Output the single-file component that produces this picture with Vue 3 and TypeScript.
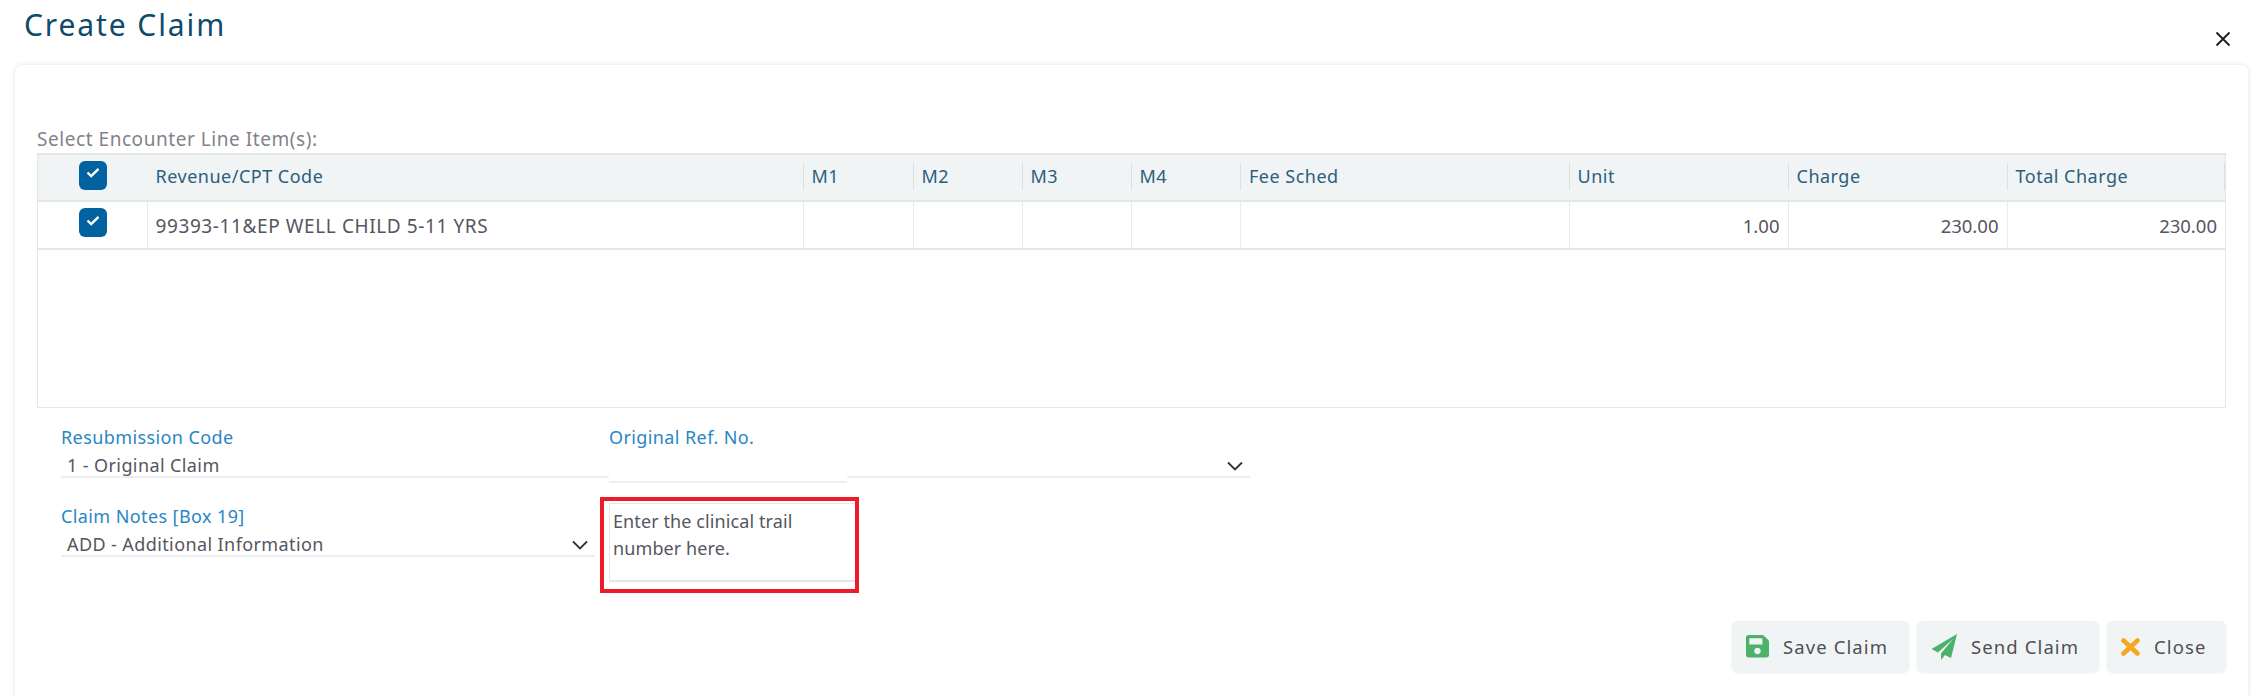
<script setup lang="ts">
interface Column { label: string }
const columns: Column[] = [
  { label: 'Revenue/CPT Code' }, { label: 'M1' }, { label: 'M2' }, { label: 'M3' }, { label: 'M4' },
  { label: 'Fee Sched' }, { label: 'Unit' }, { label: 'Charge' }, { label: 'Total Charge' },
]
const notes = 'Enter the clinical trail number here.'
</script>

<template>
  <div class="page">
    <header class="top">
      <h1 class="title">Create Claim</h1>
      <button class="x" aria-label="Close">
        <svg width="16" height="16" viewBox="0 0 16 16"><path d="M1.500 1.500 14.500 14.500M14.500 1.500 1.500 14.500" stroke="#1c1c1c" stroke-width="1.800" fill="none"/></svg>
      </button>
    </header>
    <main class="card">
      <div class="section-label">Select Encounter Line Item(s):</div>
      <div class="table">
        <div class="row head">
          <div class="cell check">
            <span class="box"><svg width="14" height="11" viewBox="0 0 14 11"><path d="M1.500 5.500 5.200 9 12.500 1.800" stroke="#fff" stroke-width="2.400" fill="none"/></svg></span>
          </div>
          <div v-for="c in columns" :key="c.label" class="cell hcell"><span>{{ c.label }}</span></div>
        </div>
        <div class="row body">
          <div class="cell check">
            <span class="box"><svg width="14" height="11" viewBox="0 0 14 11"><path d="M1.500 5.500 5.200 9 12.500 1.800" stroke="#fff" stroke-width="2.400" fill="none"/></svg></span>
          </div>
          <div class="cell code">99393-11&amp;EP WELL CHILD 5-11 YRS</div>
          <div class="cell"></div><div class="cell"></div><div class="cell"></div><div class="cell"></div><div class="cell"></div>
          <div class="cell num">1.00</div>
          <div class="cell num">230.00</div>
          <div class="cell num">230.00</div>
        </div>
      </div>

      <div class="form-row first">
        <div class="field resub">
          <label>Resubmission Code</label>
          <div class="value">1 - Original Claim</div>
        </div>
        <div class="field ref">
          <label>Original Ref. No.</label>
          <div class="value"></div>
        </div>
        <div class="field extra">
          <label>&nbsp;</label>
          <div class="value">
            <svg class="chev" width="16" height="10" viewBox="0 0 16 10"><path d="M1 1.500 8 8.500 15 1.500" stroke="#333" stroke-width="1.800" fill="none"/></svg>
          </div>
        </div>
      </div>

      <div class="form-row second">
        <div class="field notes">
          <label>Claim Notes [Box 19]</label>
          <div class="value">ADD - Additional Information
            <svg class="chev" width="16" height="10" viewBox="0 0 16 10"><path d="M1 1.500 8 8.500 15 1.500" stroke="#333" stroke-width="1.800" fill="none"/></svg>
          </div>
        </div>
        <div class="highlight">
          <textarea class="area" :value="notes"></textarea>
        </div>
      </div>

      <div class="actions">
        <button class="btn save">
          <svg width="23" height="24" viewBox="0 0 448 480" preserveAspectRatio="none"><path transform="translate(0 -32)" fill="#4cb26b" d="M433.941 129.941l-83.882-83.882A48 48 0 0 0 316.118 32H48C21.49 32 0 53.49 0 80v352c0 26.51 21.49 48 48 48h352c26.51 0 48-21.49 48-48V163.882a48 48 0 0 0-14.059-33.941zM224 416c-35.346 0-64-28.654-64-64 0-35.346 28.654-64 64-64s64 28.654 64 64c0 35.346-28.654 64-64 64zm96-304.52V212c0 6.627-5.373 12-12 12H76c-6.627 0-12-5.373-12-12V108c0-6.627 5.373-12 12-12h228.52c3.183 0 6.235 1.264 8.485 3.515l3.48 3.48A11.996 11.996 0 0 1 320 111.48z"/></svg>
          <span>Save Claim</span>
        </button>
        <button class="btn send">
          <svg width="26" height="26" viewBox="0 0 26 26"><path fill="#4cb26b" d="M26 0 .5 15 7 18.500 22 5 10 19.500 10 26 14 21 20 24Z"/></svg>
          <span>Send Claim</span>
        </button>
        <button class="btn close">
          <svg width="19" height="18" viewBox="0 0 19 18"><path d="M2.500 2.500 16.500 15.500M16.500 2.500 2.500 15.500" stroke="#f5a81c" stroke-width="4.600" stroke-linecap="round" fill="none"/></svg>
          <span>Close</span>
        </button>
      </div>
    </main>
  </div>
</template>

<style>
html, body { margin: 0; background: #fff; }
</style>

<style scoped>
.page {
  width: 2254px;
  height: 697px;
  overflow: hidden;
  display: flex;
  flex-direction: column;
  font-family: "Noto Sans", sans-serif;
  color: #55565f;
}
.top {
  height: 65px;
  flex: none;
  display: flex;
  justify-content: space-between;
  padding: 0 23px 0 24px;
}
.title {
  margin: 6px 0 0;
  font: 400 30px/38px "Noto Sans", sans-serif;
  letter-spacing: 1.9px;
  color: #0f4a6b;
}
.x {
  border: 0;
  background: none;
  padding: 0;
  height: 16px;
  margin-top: 31px;
  line-height: 0;
}
.card {
  flex: 1;
  margin: 0 6px 0 15px;
  border-radius: 7px 7px 0 0;
  box-shadow: 0 0 5px rgba(0, 0, 0, 0.12);
  padding: 62px 22px 0;
  background: #fff;
}
.section-label {
  height: 26px;
  line-height: 24px;
  font-size: 19px;
  color: #82828a;
  letter-spacing: 0.55px;
}
.table {
  width: 2189px;
  height: 255px;
  box-sizing: border-box;
  border: 1px solid #e4e6e8;
  border-top-width: 2px;
}
.row {
  display: grid;
  grid-template-columns: 109.500px 656px 110px 109px 109px 109.500px 328.500px 219px 219px 1fr;
}
.head {
  height: 45px;
  background: #f1f4f5;
  border-bottom: 2px solid #e4e6e8;
}
.body {
  height: 46px;
  border-bottom: 2px solid #e4e6e8;
}
.cell {
  font-size: 18px;
  display: flex;
  align-items: center;
  border-right: 1px solid #e8eaec;
}
.body .cell:last-child { border-right: 0; }
.check {
  box-sizing: border-box;
  padding-left: 41px;
}
.head .check { border-right: 0; }
.box {
  width: 28px;
  height: 29px;
  border-radius: 6px;
  background: #02629f;
  display: flex;
  align-items: center;
  justify-content: center;
  padding-bottom: 5px;
  box-sizing: border-box;
  margin-bottom: 5px;
}
.hcell {
  color: #2b5f7e;
  padding-left: 8px;
  padding-bottom: 3px;
  border-right: 0;
  position: relative;
  letter-spacing: 0.5px;
}
.hcell::after {
  content: "";
  position: absolute;
  right: 0;
  top: 8px;
  height: 27px;
  width: 1px;
  background: #dcdfe2;
}
.code { padding-left: 8px; padding-top: 2px; font-size: 19px; letter-spacing: 0.6px; }
.num { justify-content: flex-end; padding-right: 8px; font-size: 18.500px; }

.form-row { display: flex; margin-left: 24px; }
.first { margin-top: 18px; height: 71px; }
.second { height: 96px; }
.field label {
  display: block;
  color: #2a86c4;
  font-size: 18px;
  letter-spacing: 0.4px;
  line-height: 24px;
  height: 24px;
  margin-top: -1px;
  margin-bottom: 1px;
}
.value {
  position: relative;
  box-sizing: border-box;
  border-bottom: 2px solid #eceef0;
  height: 28px;
  padding: 2px 0 0 6px;
  font-size: 18px;
  letter-spacing: 0.4px;
  line-height: 26px;
}
.resub { width: 548px; }
.ref { width: 238px; }
.ref .value { height: 33px; }
.extra { width: 403px; }
.notes { width: 534px; margin-top: 8px; margin-right: 5px; }
.chev { position: absolute; right: 7px; top: 11px; }
.highlight {
  box-sizing: border-box;
  width: 259px;
  height: 96px;
  border: 4px solid #ed1c2b;
  padding: 2px 0 7px 5px;
}
.area {
  display: block;
  width: 100%;
  height: 100%;
  box-sizing: border-box;
  border: 1px solid #e4e6e8;
  border-bottom-width: 2px;
  border-right: 0;
  resize: none;
  outline: none;
  padding: 4px 30px 3px 3px;
  font: 18px/27px "Noto Sans", sans-serif;
  letter-spacing: 0.1px;
  color: #55565f;
  overflow: hidden;
}
.actions {
  display: flex;
  justify-content: flex-end;
  gap: 8px;
  width: 2189px;
  margin-top: 28px;
}
.btn {
  height: 51px;
  border: 0;
  border-radius: 6px;
  background: #f1f4f5;
  box-shadow: 0 1px 3px rgba(0, 0, 0, 0.08);
  display: flex;
  align-items: center;
  gap: 14px;
  padding: 0 14px;
  font: 400 18.500px "Noto Sans", sans-serif;
  letter-spacing: 1.1px;
  color: #4f4f55;
}
.save { width: 177px; }
.send { width: 182px; }
.close { width: 119px; }
</style>
